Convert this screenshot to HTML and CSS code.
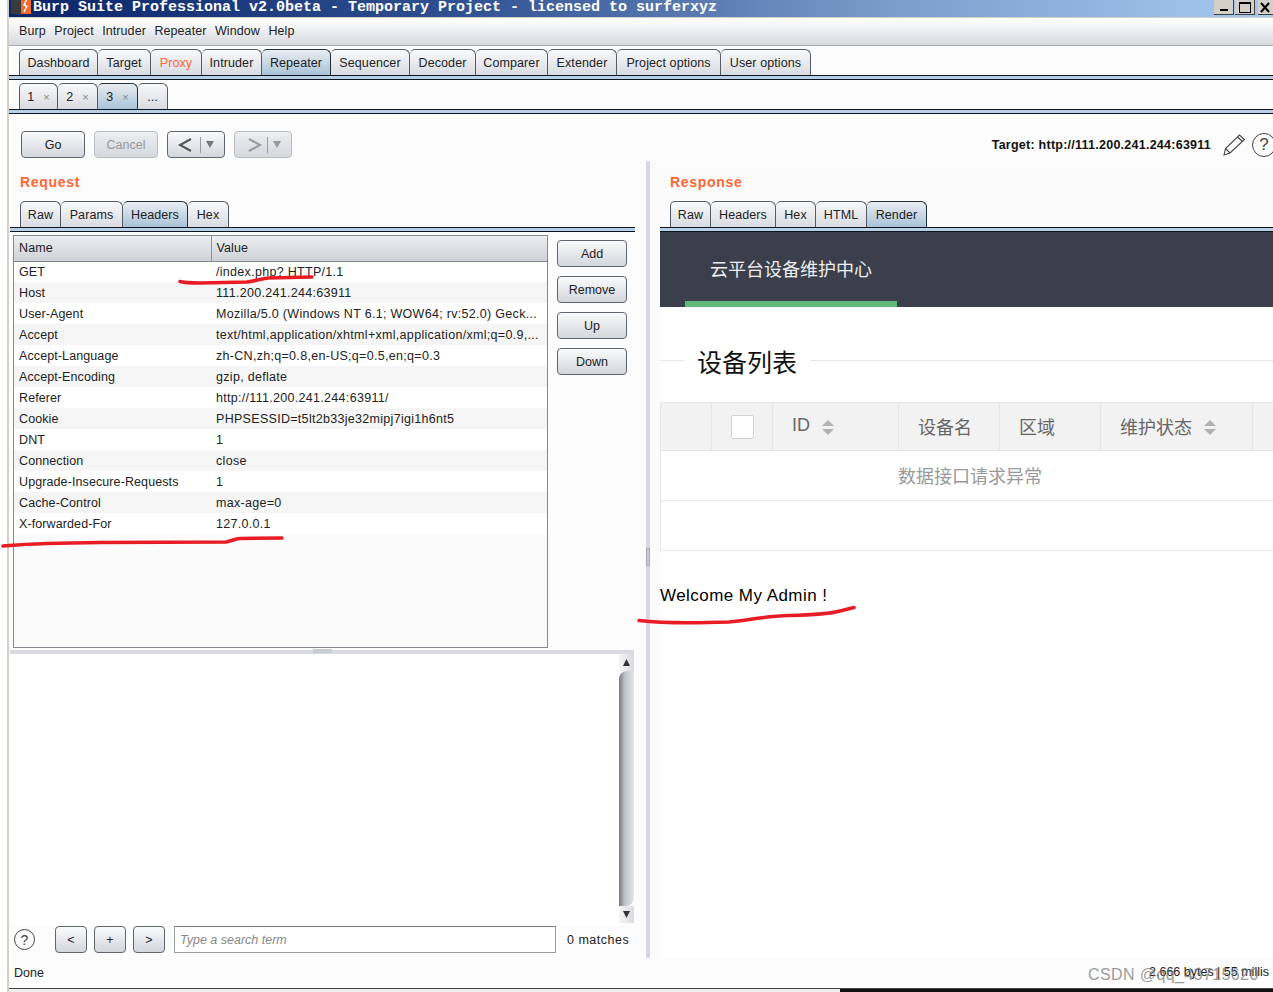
FILE: index.html
```html
<!DOCTYPE html>
<html lang="en">
<head>
<meta charset="utf-8">
<title>Burp Suite Professional</title>
<link rel="stylesheet" href="styles.css">
</head>
<body>
<div class="app">
  <header class="titlebar">
    <svg class="logo" width="24" height="18" viewBox="0 0 24 18"><rect x="2" y="0" width="10" height="15" fill="#3a3a3a"/><rect x="12" y="0" width="10" height="15" fill="#f26a2e"/><path d="M18 0 L15 6 L18 7 L15 13" fill="none" stroke="#fff" stroke-width="1.4"/></svg>
    <span class="title-text">Burp Suite Professional v2.0beta - Temporary Project - licensed to surferxyz</span>
    <div class="win-btns">
      <span class="win-btn"><svg width="20" height="15" viewBox="0 0 20 15"><rect x="6" y="9" width="8" height="2" fill="#000"/></svg></span>
      <span class="win-btn"><svg width="20" height="15" viewBox="0 0 20 15"><rect x="4.5" y="2.5" width="11" height="10" fill="none" stroke="#000"/><rect x="4" y="2" width="12" height="2" fill="#000"/></svg></span>
      <span class="win-btn win-close"><svg width="15" height="15" viewBox="0 0 15 15"><path d="M3 3 L11 12 M11 3 L3 12" stroke="#000" stroke-width="2"/></svg></span>
    </div>
  </header>
  <nav class="menubar">
    <span>Burp</span><span>Project</span><span>Intruder</span><span>Repeater</span><span>Window</span><span>Help</span>
  </nav>
  <div class="tabstrip">
    <div class="tabs tabs-main">
      <span class="tab">Dashboard</span><span class="tab">Target</span><span class="tab tab-orange">Proxy</span><span class="tab">Intruder</span><span class="tab active">Repeater</span><span class="tab">Sequencer</span><span class="tab">Decoder</span><span class="tab">Comparer</span><span class="tab">Extender</span><span class="tab">Project options</span><span class="tab">User options</span>
    </div>
    <div class="tabline"></div>
  </div>
  <div class="tabstrip">
    <div class="tabs tabs-sub">
      <span class="tab">1<i>×</i></span><span class="tab">2<i>×</i></span><span class="tab active">3<i>×</i></span><span class="tab">...</span>
    </div>
    <div class="tabline"></div>
  </div>
  <div class="toolbar">
    <button class="btn btn-go">Go</button>
    <button class="btn btn-go disabled">Cancel</button>
    <button class="btn btn-nav"><svg width="16" height="14" viewBox="0 0 16 14"><path d="M14 1 L3 7 L14 13" fill="none" stroke="#555" stroke-width="2"/></svg><b></b><em></em></button>
    <button class="btn btn-nav disabled"><svg width="16" height="14" viewBox="0 0 16 14"><path d="M2 1 L13 7 L2 13" fill="none" stroke="#999" stroke-width="2"/></svg><b></b><em></em></button>
    <div class="target">
      <strong>Target: http://111.200.241.244:63911</strong>
      <svg width="24" height="24" viewBox="0 0 24 24"><path d="M2 22 L3.5 15.5 L17.5 2 L22.5 6.5 L8 20 Z M3.5 15.5 L8 20 M15.5 4 L20.5 8.5" fill="none" stroke="#444" stroke-width="1.1"/></svg>
      <span class="help help-big">?</span>
    </div>
  </div>
  <main class="panes">
    <section class="pane-left">
      <h2 class="pane-title">Request</h2>
      <div class="tabstrip">
        <div class="tabs tabs-msg tabs-req"><span class="tab">Raw</span><span class="tab">Params</span><span class="tab active">Headers</span><span class="tab">Hex</span></div>
        <div class="tabline tabline-req"></div>
      </div>
      <div class="editor-top">
        <div class="headers-wrap">
          <table class="headers">
            <thead><tr><th>Name</th><th>Value</th></tr></thead>
            <tbody>
              <tr><td>GET</td><td>/index.php? HTTP/1.1</td></tr>
              <tr><td>Host</td><td>111.200.241.244:63911</td></tr>
              <tr><td>User-Agent</td><td>Mozilla/5.0 (Windows NT 6.1; WOW64; rv:52.0) Geck...</td></tr>
              <tr><td>Accept</td><td>text/html,application/xhtml+xml,application/xml;q=0.9,...</td></tr>
              <tr><td>Accept-Language</td><td>zh-CN,zh;q=0.8,en-US;q=0.5,en;q=0.3</td></tr>
              <tr><td>Accept-Encoding</td><td>gzip, deflate</td></tr>
              <tr><td>Referer</td><td>http://111.200.241.244:63911/</td></tr>
              <tr><td>Cookie</td><td>PHPSESSID=t5lt2b33je32mipj7igi1h6nt5</td></tr>
              <tr><td>DNT</td><td>1</td></tr>
              <tr><td>Connection</td><td>close</td></tr>
              <tr><td>Upgrade-Insecure-Requests</td><td>1</td></tr>
              <tr><td>Cache-Control</td><td>max-age=0</td></tr>
              <tr><td>X-forwarded-For</td><td>127.0.0.1</td></tr>
            </tbody>
          </table>
        </div>
        <div class="side-btns">
          <button class="btn btn-side">Add</button>
          <button class="btn btn-side">Remove</button>
          <button class="btn btn-side">Up</button>
          <button class="btn btn-side">Down</button>
        </div>
      </div>
      <div class="hsplit"><span></span></div>
      <div class="editor-body">
        <div class="scrollbar">
          <span class="sb-btn"><svg width="9" height="9" viewBox="0 0 9 9"><path d="M4.5 1 L8 8 L1 8 Z" fill="#333"/></svg></span>
          <span class="sb-thumb"></span>
          <span class="sb-btn"><svg width="9" height="9" viewBox="0 0 9 9"><path d="M1 1 L8 1 L4.5 8 Z" fill="#333"/></svg></span>
        </div>
      </div>
      <div class="searchbar">
        <span class="help">?</span>
        <button class="btn btn-mini">&lt;</button>
        <button class="btn btn-mini">+</button>
        <button class="btn btn-mini">&gt;</button>
        <div class="search-input">Type a search term</div>
        <span class="matches">0 matches</span>
      </div>
    </section>
    <div class="vsplit"><span></span></div>
    <section class="pane-right">
      <h2 class="pane-title">Response</h2>
      <div class="tabstrip">
        <div class="tabs tabs-msg tabs-res"><span class="tab">Raw</span><span class="tab">Headers</span><span class="tab">Hex</span><span class="tab">HTML</span><span class="tab active">Render</span></div>
        <div class="tabline"></div>
      </div>
      <div class="render">
        <div class="site-nav"><span class="site-name">云平台设备维护中心</span><span class="site-bar"></span></div>
        <div class="legend"><span class="legend-line short"></span><span class="legend-title">设备列表</span><span class="legend-line"></span></div>
        <div class="devices">
          <div class="dev-row dev-head">
            <div class="c c0"></div>
            <div class="c c1"><span class="check"></span></div>
            <div class="c c2">ID<span class="sort"></span></div>
            <div class="c c3">设备名</div>
            <div class="c c4">区域</div>
            <div class="c c5">维护状态<span class="sort"></span></div>
            <div class="c c6"></div>
          </div>
          <div class="dev-msg">数据接口请求异常</div>
          <div class="dev-blank"></div>
        </div>
        <p class="welcome">Welcome My Admin !</p>
      </div>
    </section>
  </main>
  <footer class="status"><span>Done</span><span class="bytes">2,666 bytes | 55 millis</span></footer>
  <div class="bottom-edge"><span></span></div>
</div>
<div class="watermark">CSDN @qq_43715620</div>
<svg class="ink" width="1273" height="992" viewBox="0 0 1273 992">
  <path d="M180 281.5 C186 283 192 283 200 283 L247 282 C255 281 260 279 268 278 L312 277"/>
  <path d="M3 546 C30 543 60 543 100 542.5 L226 542 C232 541 234 539 240 538.5 L282 538"/>
  <path d="M639 620.5 C660 623 700 623 729 622 C750 620 765 616 789 615.5 C810 615 830 614 840 611 L854 607.5"/>
</svg>
</body>
</html>
```
FILE: styles.css
```css
* { box-sizing: border-box; }
html, body { margin: 0; padding: 0; }
body {
  width: 1273px;
  height: 992px;
  overflow: hidden;
  background: #fff;
  font-family: "Liberation Sans", "Noto Sans CJK SC", sans-serif;
  font-size: 12.5px;
  color: #222;
  position: relative;
}
.app {
  height: 992px;
  margin-left: 7px;
  border-left: 2px solid #d4d0c8;
  display: flex;
  flex-direction: column;
  background: #fcfcfc;
}

/* title bar */
.titlebar {
  height: 18px;
  flex: none;
  display: flex;
  align-items: center;
  background: linear-gradient(90deg, #0a246a 0%, #2f5090 35%, #7b9dcc 70%, #a6caf0 100%);
  overflow: hidden;
  border-bottom: 1px solid #d4d0c8;
}
.logo { flex: none; margin-top: -1px; }
.title-text {
  font-family: "Liberation Mono", monospace;
  font-weight: bold;
  font-size: 15px;
  line-height: 17px;
  color: #fff;
  white-space: pre;
  margin-top: -3px;
}
.win-btns { margin-left: auto; display: flex; gap: 1px; align-self: flex-start; }
.win-btn {
  width: 20px;
  height: 15px;
  background: #d4d0c8;
  border-right: 1px solid #404040;
  border-bottom: 1px solid #404040;
  display: block;
}
.win-btn svg { display: block; }
.win-close { width: 15px; margin-left: 2px; border-right: 0; }

/* menu */
.menubar {
  height: 28px;
  flex: none;
  display: flex;
  gap: 8.5px;
  padding: 0 0 2px 10px;
  align-items: center;
  letter-spacing: .08px;
  background: linear-gradient(#fff, #f2f3f5 35%, #d6d9de);
  border-bottom: 1px solid #aaadb2;
}

/* tabs */
.tabstrip { flex: none; }
.tabs { display: flex; height: 30px; padding: 3px 0 0 10px; letter-spacing: .1px; }
.tabs-main, .tabs-sub { height: 29px; }
.tabs-sub { padding-top: 3px; }
.tab {
  display: flex;
  align-items: center;
  justify-content: center;
  height: 26px;
  border: 1px solid #555b62;
  border-bottom: 0;
  border-left-width: 0;
  border-radius: 5px 6px 0 0;
  background: linear-gradient(#f8f9fa, #d8dbe1);
  white-space: nowrap;
  color: #222;
}
.tab:first-child { border-left-width: 1px; }
.tab.active {
  background: linear-gradient(#e9edf1, #a9c3d8);
  border-color: #22303c;
}
.tab-orange { color: #ff6633; }
.tab i { font-style: normal; color: #888; font-size: 11px; margin-left: 9px; }
.tabs-main .tab:nth-child(1) { width: 79px; }
.tabs-main .tab:nth-child(2) { width: 53px; }
.tabs-main .tab:nth-child(3) { width: 51px; }
.tabs-main .tab:nth-child(4) { width: 60px; }
.tabs-main .tab:nth-child(5) { width: 69px; }
.tabs-main .tab:nth-child(6) { width: 79px; }
.tabs-main .tab:nth-child(7) { width: 66px; }
.tabs-main .tab:nth-child(8) { width: 72px; }
.tabs-main .tab:nth-child(9) { width: 69px; }
.tabs-main .tab:nth-child(10) { width: 104px; }
.tabs-main .tab:nth-child(11) { width: 90px; }
.tabs-sub .tab:nth-child(1) { width: 39px; }
.tabs-sub .tab:nth-child(2) { width: 40px; }
.tabs-sub .tab:nth-child(3) { width: 40px; }
.tabs-sub .tab:nth-child(4) { width: 30px; }
.tabline {
  height: 5px;
  background: #b8cfe4;
  border-top: 1px solid #0c1520;
  border-bottom: 1px solid #0c1520;
}
.tabs-msg { height: 26px; padding: 0; }
.tabs-req { margin-left: 11px; }
.tabs-res { margin-left: 20px; }
.tabs-req .tab:nth-child(1) { width: 41px; }
.tabs-req .tab:nth-child(2) { width: 62px; }
.tabs-req .tab:nth-child(3) { width: 65px; }
.tabs-req .tab:nth-child(4) { width: 41px; }
.tabs-res .tab:nth-child(1) { width: 41px; }
.tabs-res .tab:nth-child(2) { width: 65px; }
.tabs-res .tab:nth-child(3) { width: 40px; }
.tabs-res .tab:nth-child(4) { width: 51px; }
.tabs-res .tab:nth-child(5) { width: 60px; }
.tabline-req { margin-left: 1px; width: 625px; }

/* buttons */
.btn {
  font: inherit;
  color: #222;
  border: 1px solid #5f666e;
  border-radius: 4px;
  background: linear-gradient(#f9fafb, #d3d6dc);
  padding: 0;
  display: flex;
  align-items: center;
  justify-content: center;
}
.btn.disabled {
  color: #999;
  border-color: #b9bcc2;
  background: linear-gradient(#eceef0, #d5d8dd);
}
.toolbar {
  height: 47px;
  flex: none;
  display: flex;
  align-items: flex-start;
  padding: 17px 0 0 12px;
  gap: 9px;
}
.btn-go { width: 64px; height: 27px; }
.btn-nav { width: 58px; height: 27px; justify-content: flex-start; padding-left: 9px; }
.btn-nav.disabled { padding-left: 12px; }
.btn-nav svg { flex: none; }
.btn-nav b { width: 1px; height: 16px; background: #9a9da3; margin: 0 5px 0 7px; flex: none; }
.btn-nav.disabled b { margin-left: 4px; }
.btn-nav em { border: 4px solid transparent; border-top: 7px solid #777; border-bottom: 0; flex: none; }
.btn-nav.disabled em { border-top-color: #999; }
.target {
  margin-left: auto;
  display: flex;
  align-items: center;
  gap: 11px;
  height: 27px;
  margin-right: -3px;
}
.target strong { font-size: 12.5px; letter-spacing: .25px; color: #111; }
.target svg { margin-right: -5px; }
.help {
  display: flex;
  align-items: center;
  justify-content: center;
  flex: none;
  width: 21px;
  height: 21px;
  border: 1.5px solid #444;
  border-radius: 50%;
  font-size: 14px;
  color: #444;
}
.help-big { width: 24px; height: 24px; font-size: 17px; }

/* panes */
.panes { flex: none; height: 797px; display: flex; }
.pane-left { width: 637px; flex: none; display: flex; flex-direction: column; }
.vsplit {
  width: 4px;
  flex: none;
  background: #d5d8df;
  position: relative;
}
.vsplit span {
  position: absolute;
  left: 0;
  top: 387px;
  width: 4px;
  height: 18px;
  background: #c6cad1;
  border: 1px solid #aab;
}
.pane-right { flex: 1; min-width: 0; display: flex; flex-direction: column; background: #fbfbfb; }
.pane-title {
  margin: 0;
  height: 40px;
  flex: none;
  padding: 12px 0 0 11px;
  font-size: 14px;
  line-height: 18px;
  color: #ff6633;
  letter-spacing: .7px;
}
.pane-right .pane-title { padding-left: 20px; }
.pane-right .tabline { margin-left: 10px; }

.editor-top { height: 416px; flex: none; display: flex; padding: 3px 0 0 4px; }
.headers-wrap {
  width: 535px;
  height: 413px;
  border: 1px solid #85898f;
  background: #fbfbfb;
}
.headers { width: 533px; border-collapse: collapse; table-layout: fixed; letter-spacing: .1px; }
.headers th {
  height: 25px;
  text-align: left;
  font-weight: normal;
  padding: 0 0 0 5px;
  background: linear-gradient(#eceef1, #ced1d7);
  border-bottom: 1px solid #85898f;
}
.headers th:first-child { width: 197px; border-right: 1px solid #8e9298; }
.headers td { height: 21px; padding: 0 0 0 5px; white-space: nowrap; overflow: hidden; }
.headers td + td { letter-spacing: .3px; }
.headers tbody tr:nth-child(odd) { background: #fff; }
.headers tbody tr:nth-child(even) { background: #f5f5f5; }
.side-btns { display: flex; flex-direction: column; gap: 9px; margin: 5px 0 0 9px; }
.btn-side { width: 70px; height: 27px; }

.hsplit { height: 6px; flex: none; background: #d9dbe0; border-top: 2px solid #fbfbfb; margin-left: 1px; width: 624px; position: relative; }
.hsplit span { position: absolute; left: 303px; top: -1px; width: 19px; height: 4px; background: #c8ccd3; }

.editor-body {
  height: 272px;
  flex: none;
  background: #fff;
  margin-left: 1px;
  width: 624px;
  display: flex;
  justify-content: flex-end;
}
.scrollbar { width: 15px; display: flex; flex-direction: column; padding-bottom: 3px; }
.sb-btn { height: 17px; flex: none; background: linear-gradient(90deg, #f4f5f6, #d8dade); display: flex; align-items: center; justify-content: center; }
.sb-thumb {
  flex: 1;
  border-radius: 8px 0 8px 0;
  background: linear-gradient(90deg, #777a80, #c0c3c9 40%, #e6e7ea);
}
.searchbar {
  height: 27px;
  flex: none;
  display: flex;
  align-items: center;
  padding-left: 5px;
}
.btn-mini { width: 32px; height: 27px; margin-right: 7px; }
.help + .btn-mini { margin-left: 20px; }
.search-input {
  width: 382px;
  height: 27px;
  margin-left: 2px;
  padding: 0 5px;
  line-height: 26px;
  background: #fff;
  border: 1px solid #9a9da2;
  border-top-color: #777;
  font-style: italic;
  color: #888;
}
.matches { margin-left: 11px; white-space: nowrap; letter-spacing: .5px; }

/* rendered response */
.render {
  flex: 1;
  min-height: 0;
  margin-left: 10px;
  background: #fff;
  overflow: hidden;
}
.site-nav {
  height: 75px;
  background: #3a3f4b;
  padding: 0 0 0 25px;
  position: relative;
}
.site-name {
  display: block;
  padding: 26px 0 0 25px;
  font-size: 18px;
  line-height: 24px;
  color: #eee;
}
.site-bar {
  position: absolute;
  left: 25px;
  bottom: 0;
  width: 212px;
  height: 6px;
  background: #5fb878;
}
.legend { height: 95px; display: flex; align-items: center; padding-top: 17px; }
.legend-line { flex: 1; height: 1px; background: #e6e6e6; margin-top: -5px; }
.legend-line.short { flex: none; width: 25px; }
.legend-title { padding: 0 13px 0 12px; font-size: 25px; line-height: 34px; color: #111; white-space: nowrap; }
.devices { width: 760px; border: 1px solid #e6e6e6; border-width: 1px 0 1px 1px; color: #666; font-size: 18px; }
.dev-row { display: flex; height: 48px; background: #f2f2f2; border-bottom: 1px solid #e6e6e6; }
.c { border-right: 1px solid #e6e6e6; display: flex; align-items: center; padding: 0 0 2px 19px; flex: none; }
.c0 { width: 51px; padding: 0; }
.c1 { width: 61px; padding: 0 0 0 19px; }
.c2 { width: 126px; }
.c3 { width: 101px; }
.c4 { width: 101px; }
.c5 { width: 152px; }
.c6 { width: 100px; }
.check { width: 23px; height: 24px; background: #fff; border: 1px solid #d2d2d2; border-radius: 2px; }
.sort { display: block; width: 12px; height: 15px; margin: 4px 0 0 12px; position: relative; }
.sort::before, .sort::after {
  content: "";
  position: absolute;
  left: 0;
  border: 6px solid transparent;
}
.sort::before { top: 0; border-top: 0; border-bottom: 6px solid #b2b2b2; }
.sort::after { bottom: 0; border-bottom: 0; border-top: 6px solid #b2b2b2; }
.dev-msg { height: 50px; border-bottom: 1px solid #e6e6e6; color: #999; line-height: 49px; padding: 2px 0 0 237px; }
.dev-blank { height: 49px; }
.welcome { margin: 34px 0 0; font-size: 17px; line-height: 22px; letter-spacing: .45px; color: #000; }

/* status */
.status { height: 30px; flex: none; position: relative; display: flex; align-items: center; padding: 0 0 0 5px; }
.bytes { position: absolute; left: 1140px; top: 7px; white-space: nowrap; }
.bottom-edge { flex: 1; border-top: 1px solid #444; background: #eee; display: flex; justify-content: flex-end; }
.bottom-edge span { width: 433px; background: #111; }

/* overlays */
.watermark {
  position: absolute;
  left: 1088px;
  top: 966px;
  font-size: 16px;
  line-height: 18px;
  letter-spacing: .4px;
  color: rgba(120, 120, 120, .75);
  white-space: nowrap;
}
.ink { position: absolute; left: 0; top: 0; pointer-events: none; }
.ink path { fill: none; stroke: #e81c24; stroke-width: 3.5; stroke-linecap: round; stroke-linejoin: round; }
```
